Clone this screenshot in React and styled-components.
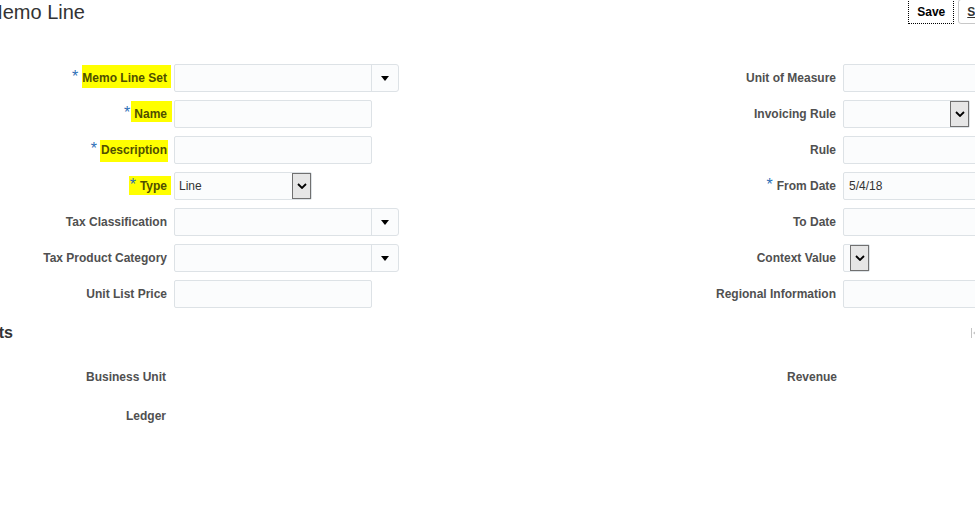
import React from "react";
import styled, { createGlobalStyle } from "styled-components";

// colours picked from the screenshot
const Colors = {
  Title: "#333333",
  Label: "#505050",
  LabelMarked: "#4f4f00",
  Text: "#333333",
  Required: "#2d6fb7",
  Marker: "#ffff00",
  FieldBg: "#fbfcfd",
  FieldBorder: "#dde2e6",
  SelectBtnBg: "#e6e6e6",
  SelectBtnBorder: "#707070",
  ButtonBorder: "#c8c8c8",
  Muted: "#c4c4c4",
};

const FONT = `"Liberation Sans", Arial, sans-serif`;

const GlobalStyle = createGlobalStyle`
  html, body {
    margin: 0;
    padding: 0;
    background: #ffffff;
  }
  body {
    font-family: ${FONT};
    overflow: hidden;
  }
`;

const Page = styled.div`
  width: 975px;
  height: 512px;
  overflow: hidden;
  background: #ffffff;
`;

const Header = styled.header`
  display: flex;
  justify-content: space-between;
  align-items: flex-start;
  height: 24px;
`;

const Title = styled.h1`
  margin: 0 0 0 -54px;
  font-size: 20px;
  line-height: 24px;
  font-weight: normal;
  color: ${Colors.Title};
  white-space: nowrap;
`;

const Toolbar = styled.div`
  display: flex;
  gap: 4px;
  margin-top: -1px;
  margin-right: -90px;
`;

const Button = styled.button`
  box-sizing: border-box;
  height: 25px;
  padding: 0 8px;
  font: bold 12px ${FONT};
  color: ${(p) => (p.$focused ? "#000000" : "#333333")};
  background: #ffffff;
  border: 1px ${(p) => (p.$focused ? "dotted #000000" : `solid ${Colors.ButtonBorder}`)};
  border-radius: ${(p) => (p.$focused ? "0" : "3px")};
  white-space: nowrap;

  u {
    text-decoration: underline;
  }
`;

const FormGrid = styled.div`
  display: flex;
  margin-top: ${(p) => p.$top}px;
`;

const FormColumn = styled.div`
  display: grid;
  grid-template-columns: ${(p) => p.$labelWidth}px max-content;
  grid-auto-rows: 28px;
  column-gap: 7px;
  row-gap: ${(p) => p.$rowGap}px;
  align-items: center;
  flex: ${(p) => (p.$fixed ? "0 0 500px" : "1 0 auto")};
`;

const Label = styled.label`
  justify-self: end;
  font-weight: bold;
  font-size: 12px;
  line-height: 14px;
  color: ${Colors.Label};
  white-space: nowrap;
`;

const Required = styled.span`
  font-size: 16px;
  line-height: 0;
  font-weight: normal;
  color: ${Colors.Required};
  margin-right: 4px;
`;

// hand-drawn highlighter strokes differ a little from label to label;
// the overhang is pulled back so the text keeps its place
const Marker = styled.span`
  background: ${Colors.Marker};
  color: ${Colors.LabelMarked};
  padding: ${(p) => `${p.$top}px ${p.$right}px ${p.$bottom}px ${p.$left}px`};
  margin: 0 ${(p) => -p.$right}px 0 ${(p) => -p.$left}px;
`;

const TextInput = styled.input`
  box-sizing: border-box;
  width: ${(p) => p.$width}px;
  height: 28px;
  margin: 0;
  padding: 0 5px;
  background: ${Colors.FieldBg};
  border: 1px solid ${Colors.FieldBorder};
  border-radius: 2px;
  font: 12px ${FONT};
  color: ${Colors.Text};
  outline: none;
`;

const Combo = styled.div`
  box-sizing: border-box;
  display: flex;
  width: ${(p) => p.$width}px;
  height: 28px;
  background: ${Colors.FieldBg};
  border: 1px solid ${Colors.FieldBorder};
  border-radius: 2px 3px 3px 2px;
`;

const ComboValue = styled.span`
  flex: 1;
`;

const ComboButton = styled.span`
  display: flex;
  align-items: center;
  justify-content: center;
  width: 26px;
  border-left: 1px solid ${Colors.FieldBorder};
`;

const Select = styled.div`
  box-sizing: border-box;
  display: flex;
  width: ${(p) => p.$width}px;
  height: 28px;
  background: ${Colors.FieldBg};
  border: 1px solid ${Colors.FieldBorder};
  border-radius: 2px;
`;

const SelectValue = styled.span`
  flex: 1;
  display: flex;
  align-items: center;
  padding-left: 4px;
  font-size: 12px;
  color: ${Colors.Text};
  overflow: hidden;
`;

const SelectButton = styled.span`
  box-sizing: border-box;
  display: flex;
  align-items: center;
  justify-content: center;
  width: 19px;
  background: ${Colors.SelectBtnBg};
  border: 1px solid ${Colors.SelectBtnBorder};
`;

const Output = styled.span``;

const SectionHeader = styled.div`
  display: flex;
  justify-content: space-between;
  align-items: center;
  height: 20px;
  margin-top: 15px;
`;

const SectionTitle = styled.h2`
  margin: 0 0 0 -60px;
  font-size: 16px;
  line-height: 20px;
  font-weight: bold;
  color: ${Colors.Title};
  white-space: nowrap;
`;

const PagerIcon = styled.span`
  display: flex;
  margin-right: -8px;
`;

const Triangle = () => (
  <svg width="8" height="5" viewBox="0 0 8 5">
    <polygon points="0,0 8,0 4,5" fill="#000" />
  </svg>
);

const Chevron = () => (
  <svg width="10" height="6" viewBox="0 0 10 6">
    <polyline points="1,1 5,5 9,1" fill="none" stroke="#000" strokeWidth="1.8" />
  </svg>
);

const FieldLabel = ({ required, mark, markAll, children }) => {
  const marker = (content) => (
    <Marker $top={mark[0]} $right={mark[1]} $bottom={mark[2]} $left={mark[3]}>
      {content}
    </Marker>
  );
  if (markAll) {
    return (
      <Label>
        {marker(
          <>
            <Required>*</Required>
            {children}
          </>
        )}
      </Label>
    );
  }
  return (
    <Label>
      {required && <Required>*</Required>}
      {mark ? marker(children) : children}
    </Label>
  );
};

const ComboField = ({ width }) => (
  <Combo $width={width}>
    <ComboValue />
    <ComboButton>
      <Triangle />
    </ComboButton>
  </Combo>
);

const SelectField = ({ width, value }) => (
  <Select $width={width}>
    <SelectValue>{value}</SelectValue>
    <SelectButton>
      <Chevron />
    </SelectButton>
  </Select>
);

export default function App() {
  return (
    <Page>
      <GlobalStyle />
      <Header>
        <Title>Edit Memo Line</Title>
        <Toolbar>
          <Button $focused>Save</Button>
          <Button>
            <u>S</u>ave and Close
          </Button>
        </Toolbar>
      </Header>

      <FormGrid $top={40}>
        <FormColumn $fixed $labelWidth={167} $rowGap={8}>
          <FieldLabel required mark={[6, 4, 3, 0]}>
            Memo Line Set
          </FieldLabel>
          <ComboField width={225} />

          <FieldLabel required mark={[6, 5, 1, 3]}>
            Name
          </FieldLabel>
          <TextInput $width={198} readOnly />

          <FieldLabel required mark={[3, 1, 5, 1]}>
            Description
          </FieldLabel>
          <TextInput $width={198} readOnly />

          <FieldLabel markAll mark={[3, 4, 2, 1]}>
            Type
          </FieldLabel>
          <SelectField width={138} value="Line" />

          <FieldLabel>Tax Classification</FieldLabel>
          <ComboField width={225} />

          <FieldLabel>Tax Product Category</FieldLabel>
          <ComboField width={225} />

          <FieldLabel>Unit List Price</FieldLabel>
          <TextInput $width={198} readOnly />
        </FormColumn>

        <FormColumn $labelWidth={336} $rowGap={8}>
          <FieldLabel>Unit of Measure</FieldLabel>
          <TextInput $width={198} readOnly />

          <FieldLabel>Invoicing Rule</FieldLabel>
          <SelectField width={127} />

          <FieldLabel>Rule</FieldLabel>
          <TextInput $width={198} readOnly />

          <FieldLabel required>From Date</FieldLabel>
          <TextInput $width={198} readOnly value="5/4/18" />

          <FieldLabel>To Date</FieldLabel>
          <TextInput $width={198} readOnly />

          <FieldLabel>Context Value</FieldLabel>
          <SelectField width={27} />

          <FieldLabel>Regional Information</FieldLabel>
          <TextInput $width={198} readOnly />
        </FormColumn>
      </FormGrid>

      <SectionHeader>
        <SectionTitle>Accounts</SectionTitle>
        <PagerIcon>
          <svg width="12" height="10" viewBox="0 0 12 10">
            <rect x="0" y="0" width="1" height="10" fill={Colors.Muted} />
            <polygon points="2,5 7,1.5 7,8.5" fill={Colors.Muted} />
          </svg>
        </PagerIcon>
      </SectionHeader>

      <FormGrid $top={20}>
        <FormColumn $fixed $labelWidth={166} $rowGap={11}>
          <FieldLabel>Business Unit</FieldLabel>
          <Output />
          <FieldLabel>Ledger</FieldLabel>
          <Output />
        </FormColumn>
        <FormColumn $labelWidth={337} $rowGap={11}>
          <FieldLabel>Revenue</FieldLabel>
          <Output />
        </FormColumn>
      </FormGrid>
    </Page>
  );
}
